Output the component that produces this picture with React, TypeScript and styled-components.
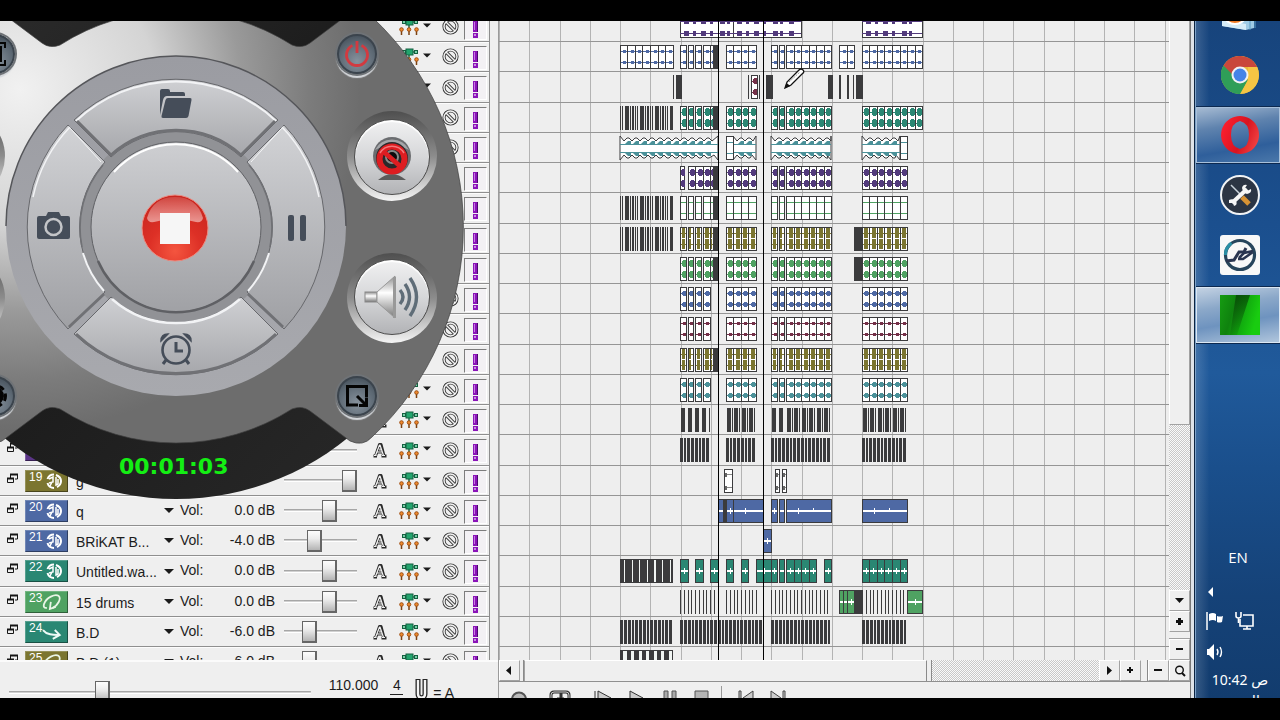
import React from 'react';
import styled, { createGlobalStyle, css } from 'styled-components';

const GlobalStyle = createGlobalStyle`
  *, *::before, *::after { box-sizing: border-box; }
  body {
    margin: 0;
    background: #000;
    color: #1c1c1c;
    font-family: "Liberation Sans", Arial, sans-serif;
    font-size: 14px;
    line-height: 18px;
  }
  ul { margin: 0; padding: 0; list-style: none; }
  button {
    margin: 0; padding: 0; border: 0; background: none;
    color: inherit; font: inherit; cursor: pointer;
  }
`;

/* ---------- palette ---------- */

const ink = '#3b3b3d';
const palette = {
  olive: '#7b7530',
  blue: '#4e69a4',
  teal: '#2a8773',
  green: '#4fa262',
  purple: '#523a7c',
  cyan: '#4b9199',
  maroon: '#743048',
};

/* ---------- page frame ---------- */

const Screen = styled.div`
  display: flex;
  flex-direction: column;
  height: 100vh;
  padding: 21px 0 22px;
  background: #000;
`;

const Desktop = styled.main`
  position: relative;
  display: flex;
  flex: 1;
  min-height: 0;
  overflow: hidden;
  background: #efefef;
`;

const TrackPane = styled.section`
  display: flex;
  flex: none;
  flex-direction: column;
  width: 499px;
  border-right: 1px solid #9b9b9b;
`;

const TrackScroll = styled.div`
  flex: 1;
  min-height: 0;
  overflow: hidden;
  margin-right: 8px;
  border-right: 1px solid #8d8d8d;
`;

const ScrolledList = styled.ul`
  margin-top: -9px;
`;

const rowHeight = (i: number) => (i % 4 === 2 ? 31 : 30);

const TrackRow = styled.li<{ $h: number }>`
  display: grid;
  grid-template-columns: 18px 51px 88px 16px 28px 67px 9px 73px 15px 20px 7px 24px 14px 5px 20px 2px 23px;
  align-items: center;
  height: ${(p) => p.$h}px;
  padding-left: 7px;
  border-bottom: 1px solid #8f8f8f;
  box-shadow: inset 0 1px 0 #fcfcfc;
`;

const Cell = styled.span<{ $col: number }>`
  grid-row: 1;
  grid-column: ${(p) => p.$col};
  padding-bottom: 2px;
`;

const IconButton = styled.button<{ $col: number; $raise?: number }>`
  display: flex;
  grid-row: 1;
  grid-column: ${(p) => p.$col};
  align-items: center;
  padding-bottom: ${(p) => p.$raise ?? 0}px;
`;

const Badge = styled.button<{ $color: string }>`
  display: flex;
  grid-row: 1;
  grid-column: 2;
  justify-content: space-between;
  width: 43px;
  height: 22px;
  padding: 0 5px 0 3px;
  border: 1px solid #00000066;
  border-top-color: #ffffff33;
  border-left-color: #ffffff33;
  background: ${(p) => p.$color};
  color: #fff;
  font-size: 12px;
  line-height: 13px;
`;

const TrackName = styled(Cell)`
  padding: 2px 0 0;
  white-space: nowrap;
`;

const Amount = styled(Cell)`
  text-align: right;
`;

const Fader = styled.input<{ $col?: number }>`
  grid-row: 1;
  grid-column: ${(p) => p.$col ?? 'auto'};
  width: 100%;
  height: 24px;
  margin: 0;
  appearance: none;
  background: linear-gradient(#a6a6a6 1px, #d0d0d0 1px 2px, #fff 2px) center / 100% 3px no-repeat;

  &::-webkit-slider-thumb {
    appearance: none;
    width: 15px;
    height: 22px;
    border: 1px solid #666;
    border-right-width: 2px;
    border-bottom-width: 2px;
    background: linear-gradient(#fdfdfd, #ececec 40%, #b4b4b4);
  }
`;

const FxButton = styled.button`
  display: flex;
  grid-row: 1;
  grid-column: 17;
  align-items: flex-end;
  justify-content: center;
  height: 24px;
  margin-top: 2px;
  padding: 0 0 1px;
  border: 1px solid #fff;
  border-top-color: #7d7d7d;
  border-left-color: #7d7d7d;
  background: #f3f1f4;
`;

const TempoBar = styled.div`
  display: flex;
  flex: none;
  gap: 12px;
  height: 38px;
  padding: 14px 44px 0 9px;
  overflow: hidden;
  border-top: 2px solid #fbfbfb;
`;

const TempoFader = styled(Fader)`
  flex: 1;
  width: auto;
  height: 24px;
  margin-right: 6px;
  margin-top: 4px;
`;

const Meter = styled.span`
  align-self: flex-start;
  width: 13px;
  border-bottom: 1px solid #222;
  text-align: center;
`;

const Tuning = styled.span`
  display: flex;
  gap: 5px;
  align-items: flex-start;
`;

const TuneKey = styled.span`
  padding-top: 8px;
`;

/* ---------- arrangement ---------- */

const ArrangePane = styled.section`
  display: flex;
  flex: 1;
  flex-direction: column;
  min-width: 0;
`;

const ArrangeTop = styled.div`
  display: flex;
  flex: 1;
  min-height: 0;
`;

const Lanes = styled.div`
  position: relative;
  flex: 1;
  min-width: 0;
  overflow: hidden;
  background: #eeeeee;
`;

const Lane = styled.li<{ $h: number }>`
  height: ${(p) => p.$h}px;
  padding-top: 3px;
  border-bottom: 1px solid #959595;
  background:
    linear-gradient(
      90deg,
      #b3b3b3 1px, transparent 1px 30px,
      #b3b3b3 30px 31px, transparent 31px 61px,
      #b3b3b3 61px 62px, transparent 62px 91px,
      #b3b3b3 91px 92px, transparent 92px
    ) 0 0 / 121px 100%;
`;

const LaneArt = styled.svg`
  display: block;
  width: 100%;
  height: 24px;
  overflow: visible;
`;

const CursorLine = styled.div<{ $x: number }>`
  position: absolute;
  top: 0;
  bottom: 0;
  left: ${(p) => p.$x}px;
  width: 1px;
  background: #000;
`;

const PencilCursor = styled.svg`
  position: absolute;
  top: 46px;
  left: 285px;
`;

const dither = css`
  background: repeating-conic-gradient(#c9c9c9 0 25%, #fafafa 0 50%) 0 0 / 2px 2px;
`;

const VScroll = styled.div`
  display: flex;
  flex: none;
  flex-direction: column;
  width: 21px;
`;

const HScroll = styled.div`
  display: flex;
  flex: none;
  height: 22px;
  border-bottom: 1px solid #8f8f8f;
`;

const ScrollButton = styled.button`
  display: flex;
  flex: none;
  align-items: center;
  justify-content: center;
  width: 21px;
  height: 21px;
  border: 1px solid #a2a2a2;
  border-top-color: #fff;
  border-left-color: #fff;
  background: #efefef;
`;

const ThumbV = styled.div`
  flex: 402;
  border: 1px solid #a2a2a2;
  border-top: 0;
  border-left-color: #fff;
`;

const TrackV = styled.div`
  flex: 165;
  ${dither}
`;

const SplitV = styled.div`
  flex: none;
  height: 7px;
  border-bottom: 1px solid #a2a2a2;
`;

const ThumbH = styled.div`
  flex: 400;
  border-left: 1px solid #a2a2a2;
  border-right: 1px solid #8a8a8a;
  border-top: 1px solid #fff;
`;

const GripH = styled.div<{ $w: number }>`
  flex: none;
  width: ${(p) => p.$w}px;
  border-right: 1px solid #8a8a8a;
`;

const TrackH = styled.div`
  flex: 166;
  ${dither}
`;

const Transport = styled.div`
  display: flex;
  flex: none;
  gap: 16px;
  height: 16px;
  padding: 8px 0 0 10px;
  overflow: hidden;
`;

const TransportButton = styled.button<{ $w: number }>`
  flex: none;
  width: ${(p) => p.$w}px;
  height: 16px;
`;

const TransportRule = styled.span`
  width: 1px;
  margin: -4px 0 0 -4px;
  background: #999;
`;

const Edge = styled.div`
  flex: none;
  width: 5px;
  border-left: 1px solid #777;
  border-right: 1px solid #0c2340;
  background: #dfe3e8;
`;

/* ---------- taskbar ---------- */

const Taskbar = styled.aside`
  display: flex;
  flex: none;
  flex-direction: column;
  width: 85px;
  border-left: 1px solid #7fa3c8;
  background:
    linear-gradient(90deg, #ffffff26, transparent 16%),
    linear-gradient(#17447c, #1b4f8e 30%, #205a9b 52%, #1a4f8c 66%, #154278 85%, #123c6e);
  overflow: hidden;
`;

const Apps = styled.ul`
  display: flex;
  flex: none;
  flex-direction: column;
  gap: 4px;
  margin-top: -34px;
`;

const AppButton = styled.button<{ $active?: number }>`
  display: flex;
  align-items: center;
  justify-content: center;
  width: 100%;
  height: 56px;
  padding-left: 4px;
  ${(p) =>
    p.$active === 1 &&
    css`
      background: linear-gradient(170deg, #a9bdd4, #5f83ae 34%, #2f5f9b 70%, #4c79ab);
      box-shadow: 0 0 0 1px #0c2950, inset 0 0 0 1px #a8c0da;
    `}
  ${(p) =>
    p.$active === 2 &&
    css`
      background: linear-gradient(170deg, #c6d4e4, #8ba8c9 34%, #6e93bf 60%, #b3c8de);
      box-shadow: 0 0 0 1px #0c2950, inset 0 0 0 1px #dbe7f3;
    `}
`;

const Tray = styled.div`
  display: flex;
  flex: none;
  flex-direction: column;
  height: 151px;
  margin-top: auto;
  color: #fff;
`;

const Language = styled.button`
  flex: none;
  height: 20px;
  margin-bottom: 9px;
  text-align: center;
  font-family: "Open Sans", "Noto Sans", sans-serif;
  font-size: 15px;
  line-height: 20px;
`;

const TrayRow = styled.div`
  display: flex;
  flex: none;
  gap: 10px;
  align-items: center;
  height: 31px;
  padding-left: 9px;
`;

const Clock = styled.time`
  flex: none;
  margin-top: 1px;
  padding-left: 4px;
  font-family: "Noto Sans", "DejaVu Sans", sans-serif;
  font-size: 14px;
  line-height: 20px;
  text-align: center;
  white-space: nowrap;
`;

const Day = styled.div`
  margin-top: 1px;
`;

/* ---------- recorder ---------- */

const Recorder = styled.section`
  position: absolute;
  top: 0;
  left: 0;
  width: 470px;
  height: 480px;
  overflow: hidden;
  pointer-events: none;
`;

const RecorderBody = styled.svg`
  position: absolute;
  inset: 0;
`;

const DialButton = styled.button<{ $x: number; $y: number; $r: number }>`
  position: absolute;
  display: flex;
  align-items: center;
  justify-content: center;
  left: ${(p) => p.$x - p.$r}px;
  top: ${(p) => p.$y - p.$r}px;
  width: ${(p) => p.$r * 2}px;
  height: ${(p) => p.$r * 2}px;
  border-radius: 50%;
  pointer-events: auto;

  svg { flex: none; }
`;

const SmallKnob = styled(DialButton)`
  border: 2px solid #3b444d;
  background: radial-gradient(circle at 50% 70%, #87929d, #5b6772 60%, #3a444e);
  box-shadow: 0 0 0 2px #6f7377, 0 3px 1px 1px #d5d8dc;
`;

const LargeKnob = styled(DialButton)`
  border: 1px solid #4c4c4c;
  background: linear-gradient(#f1f1f2, #d6d7d9 50%, #b2b3b6);
  box-shadow: inset 0 2px 1px #fff;
`;

const Elapsed = styled.time`
  position: absolute;
  top: 436px;
  left: 119px;
  color: #14ee14;
  font-family: "DejaVu Sans", sans-serif;
  font-size: 22px;
  font-weight: bold;
  line-height: 20px;
`;

/* ---------- icons ---------- */

const Caret = ({ size = 9 }: { size?: number }) => (
  <svg width={size} height="5" viewBox="0 0 10 5" aria-hidden="true">
    <path d="M0 0h10L5 5z" fill="#1a1a1a" />
  </svg>
);

const RestoreIcon = () => (
  <svg width="11" height="11" viewBox="0 0 11 11" fill="none" stroke="#151515">
    <path d="M3.5 5V1.5h7V6H8" />
    <path d="M3 1.5h8" strokeWidth="2" />
    <path d="M.5 5.5h6v4h-6z" fill="#efefef" />
    <path d="M0 5.5h7" strokeWidth="2" />
  </svg>
);

const WheelIcon = () => (
  <svg width="16" height="20" viewBox="0 -2 16 20" fill="none" stroke="#fff" strokeWidth="2">
    <path d="M10 2q5 2 5 6t-4 6" />
    <path d="M8 15Q3 15 1.500 10" />
    <path d="M1.500 6Q3 1.500 8 1.500" />
    <path d="M3 6l4-2v5l-4 1M6 9l-2 4M10 4v8l2-1V6" strokeWidth="1.500" />
  </svg>
);

const LoopIcon = () => (
  <svg width="20" height="19" viewBox="0 -2 20 19" fill="none" stroke="#e9f5e6" strokeWidth="1.8">
    <path d="M5 14C-1 15 2 6 9 2.500S20 2 17 8c-1.500 3-4 5-6 6" />
    <path d="M9 8l-1 7 6-2" />
  </svg>
);

const ShotIcon = () => (
  <svg width="20" height="18" viewBox="0 -4 20 18" fill="none" stroke="#eefaf6" strokeWidth="2">
    <path d="M1 4c4 5 10 5 16 5" />
    <path d="M13 4l5 5-7 4" />
  </svg>
);

const AutoIcon = () => (
  <svg width="16" height="16" viewBox="0 0 16 16" strokeLinejoin="round">
    <path d="M1.500 14h3.500M9.500 14h5M3.500 14 7.500 2.500h1.500L12 14M5 10h6" fill="none" stroke="#2a2a2a" strokeWidth="3" />
    <path d="M2 13.500h2.500M10 13.500h3M3.500 13.500 7.500 3h.500L11.500 13.500M5 10h5" fill="none" stroke="#f2f2f2" strokeWidth="1.200" />
  </svg>
);

const RouteIcon = () => (
  <svg width="20" height="17" viewBox="0 0 20 17">
    <path d="M3 4h14M10 7v3" stroke="#1f6b4a" strokeWidth="1.500" />
    <rect x="7" y="1" width="7" height="6" fill="#23a56e" stroke="#146040" />
    <rect x="3.500" y="2.500" width="3" height="3" fill="#79cfa8" stroke="#146040" />
    <rect x="15.500" y="2.500" width="3" height="3" fill="#79cfa8" stroke="#146040" />
    <path d="M2.500 12v5M10 12v5M17.500 12v5" stroke="#7b4212" strokeWidth="1.500" />
    <circle cx="2.500" cy="11.500" r="1.800" fill="#ef8a2e" stroke="#a04f12" />
    <circle cx="10" cy="11.500" r="1.800" fill="#ef8a2e" stroke="#a04f12" />
    <circle cx="17.500" cy="11.500" r="1.800" fill="#ef8a2e" stroke="#a04f12" />
  </svg>
);

const MuteIcon = () => (
  <svg width="17" height="17" viewBox="0 0 17 17" fill="none">
    <circle cx="8.500" cy="8.500" r="6.500" stroke="#3a3a3a" strokeWidth="3.200" />
    <path d="M3 3l11 11" stroke="#3a3a3a" strokeWidth="3.200" />
    <circle cx="8.500" cy="8.500" r="6.500" stroke="#f4f4f4" strokeWidth="1.400" />
    <path d="M4 4l9 9" stroke="#f4f4f4" strokeWidth="1.400" />
  </svg>
);

const SoloIcon = () => (
  <svg width="7" height="17" viewBox="0 0 7 17">
    <rect x="1" y="0" width="5" height="11" fill="#8a14b8" />
    <rect x="2" y="1" width="1" height="8" fill="#c77be2" />
    <rect x="5" y="0" width="1" height="11" fill="#4d0870" />
    <rect x="1" y="12" width="5" height="5" fill="#8a14b8" />
    <rect x="2" y="13" width="2" height="2" fill="#c98fe0" />
  </svg>
);

const ForkIcon = () => (
  <svg width="13" height="24" viewBox="0 -3 13 24" fill="none">
    <path d="M3 0v15c0 5 7 5 7 0V0" stroke="#262626" strokeWidth="5" />
    <path d="M3 1v14c0 5 7 5 7 0V1" stroke="#f6f6f6" strokeWidth="2.400" />
  </svg>
);

const Arrow = ({ d }: { d: string }) => (
  <svg width="11" height="11" viewBox="0 0 11 11"><path d={d} fill="#111" /></svg>
);

const MagnifyIcon = () => (
  <svg width="12" height="12" viewBox="0 0 12 12" fill="none" stroke="#111">
    <circle cx="5.500" cy="5" r="3.800" strokeWidth="1.400" />
    <path d="M8 8l3 3" strokeWidth="2" />
  </svg>
);

/* ---------- arrangement data: positions in beats ---------- */

const beatX = (b: number) => Math.round(b * 7.5625 - 0.3);

type Span = [number, number];
type Part =
  | { kind: 'cells'; span: Span; color: string; amp: number }
  | { kind: 'dark'; span: Span }
  | { kind: 'streak'; span: Span }
  | { kind: 'bars'; span: Span; code: Code }
  | { kind: 'crimp'; span: Span; color: string }
  | { kind: 'solid'; span: Span; color: string }
  | { kind: 'wide'; span: Span; color: string }
  | { kind: 'box'; span: Span };

type Code = { period: number; bars: Span[] };
const codes: Record<string, Code> = {
  mixed: { period: 15, bars: [[0, 1], [2, 1], [5, 4], [10, 1], [12, 2]] },
  blocks: { period: 7, bars: [[1, 4]] },
  coarse: { period: 15, bars: [[1, 4], [6, 1], [8, 4], [13, 1]] },
  even: { period: 15, bars: [[0, 3], [4, 2], [7, 3], [11, 3]] },
  thin: { period: 15, bars: [[0, 1], [4, 1], [8, 1], [11, 1]] },
  dense: { period: 15, bars: [[0, 3], [4, 3], [8, 3], [12, 2]] },
};

const cells = (color: string, amp: number, ...spans: Span[]): Part[] =>
  spans.map((span) => ({ kind: 'cells', span, color, amp }));
const dark = (...spans: Span[]): Part[] => spans.map((span) => ({ kind: 'dark', span }));
const bars = (name: string, ...spans: Span[]): Part[] =>
  spans.map((span) => ({ kind: 'bars', span, code: codes[name] }));
const solid = (color: string, ...spans: Span[]): Part[] =>
  spans.map((span) => ({ kind: 'solid', span, color }));

const intro: Span[] = [[24, 24.750], [25, 25.750], [26, 26.750]];
const body: Span[] = [[30, 34], [36, 36.750], [37, 37.750], [38, 44]];
const outro: Span = [48, 54];

const lanes: Part[][] = [
  [
    { kind: 'wide', span: [24, 31], color: palette.purple },
    { kind: 'wide', span: [31, 40], color: palette.purple },
    { kind: 'wide', span: [48, 56], color: palette.purple },
  ],
  [
    ...cells(palette.blue, 3, [16, 23], ...intro, [27, 28.500], ...body, [45, 47], [48, 56]),
    ...dark([28.400, 29]),
  ],
  [
    ...dark([23.100, 23.200], [23.400, 24.300], [33, 33.100], [34.400, 34.500], [35.400, 36.300], [43.500, 44.200], [45, 45.300], [46, 46.300], [46.900, 47], [47.300, 48.200]),
    ...cells(palette.maroon, 6, [33.400, 34.200]),
  ],
  [
    ...bars('mixed', [16, 23]),
    ...cells(palette.teal, 8, ...intro, [27, 28.500], ...body, [48, 56]),
    ...dark([28.400, 29]),
  ],
  [
    { kind: 'crimp', span: [16, 29], color: palette.cyan },
    { kind: 'crimp', span: [31, 34], color: palette.cyan },
    ...cells(palette.cyan, 1, [30, 31]),
    { kind: 'crimp', span: [36, 44], color: palette.cyan },
    { kind: 'crimp', span: [48, 53], color: palette.cyan },
    ...cells(palette.cyan, 1, [53, 54]),
  ],
  [...cells(palette.purple, 7, [24, 24.500], [25, 28.500], ...body, outro), ...dark([28.400, 29])],
  [
    ...bars('mixed', [16, 23]),
    ...cells(palette.green, 1, ...intro, [27, 28.500], ...body, outro),
    ...dark([28.400, 29]),
  ],
  [
    ...bars('mixed', [16, 23]),
    ...cells(palette.olive, 10, ...intro, [27, 28.500], ...body, outro),
    ...dark([28.400, 29], [47, 48]),
  ],
  [...cells(palette.green, 7, ...intro, [27, 28.500], ...body, outro), ...dark([28.400, 29], [47, 48])],
  cells(palette.blue, 5, ...intro, [27, 28], ...body, outro),
  cells(palette.maroon, 3, ...intro, [27, 28], ...body, outro),
  [...cells(palette.olive, 10, ...intro, [27, 28.500], ...body, outro), ...dark([28.400, 29])],
  cells(palette.cyan, 5, ...intro, [27, 28], ...body, outro),
  [...bars('blocks', [24, 28], [36, 38]), ...bars('coarse', [30, 34], [38, 44], outro)],
  bars('even', [24, 28], [30, 34], [36, 44], outro),
  [
    { kind: 'box', span: [29.750, 30.850] },
    { kind: 'box', span: [36.500, 37.100] },
    { kind: 'box', span: [37.400, 38] },
  ],
  [
    ...solid(palette.blue, [29, 29.700], [30, 31], [31, 35], [36, 36.750], [37, 37.750], [38, 44], outro),
    ...dark([29.700, 30.100]),
  ],
  solid(palette.blue, [35, 36]),
  [
    ...dark([16, 23]),
    ...[16, 17, 18, 19, 20, 21, 22].map((b): Part => ({ kind: 'streak', span: [b + 0.600, b + 0.750] })),
    ...solid(palette.teal, [24, 25], [26, 27], [28, 29], [30, 31], [32, 33], [34, 36], [36, 36.750], [37, 37.750], [38, 39], [39, 40], [40, 41], [41, 42], [43, 44]),
    ...solid(palette.teal, [48, 49], [49, 50], [50, 51], [51, 52], [52, 53], [53, 54]),
  ],
  [
    ...bars('thin', [24, 29], [30, 34.300], [36, 44], [48, 54]),
    ...solid(palette.green, [45, 45.500], [45.500, 46], [46, 47], [54, 56]),
    ...dark([47, 48]),
  ],
  bars('dense', [16, 23], [24, 35], [36, 44], outro),
  [
    ...dark([16, 23]),
    ...[16, 17, 18, 19, 20, 21, 22].map((b): Part => ({ kind: 'streak', span: [b + 0.500, b + 0.900] })),
  ],
];

function Wave({ x, w, color, amp }: { x: number; w: number; color: string; amp: number }) {
  const mid = x + Math.round(w / 2);
  const wide = Math.min(5, w - 1);
  const top = Math.floor(amp / 2);
  return (
    <g fill={color}>
      {[6, 17].map((y) => (
        <g key={y}>
          <rect x={x} y={y} width={w} height="1" />
          {amp >= 10 && <rect x={mid - 2} y={y - 5} width={wide - 1} height={amp} />}
          {amp > 2 && amp < 10 && (
            <>
              <rect x={mid - 1} y={y - top} width="3" height={amp} />
              <rect x={mid - 2} y={y - top + 1} width={wide} height={amp - 2} />
            </>
          )}
        </g>
      ))}
    </g>
  );
}

function CellRun({ span, color, amp }: { span: Span; color: string; amp: number }) {
  const out: React.ReactNode[] = [];
  for (let b = span[0]; b < span[1]; b += 1) {
    const x = beatX(b);
    const w = beatX(Math.min(b + 1, span[1])) - x;
    out.push(
      <g key={b}>
        <rect x={x + 0.500} y="0.500" width={w} height="23" fill="#fff" stroke={ink} />
        <Wave x={x + 1} w={w - 1} color={color} amp={amp} />
      </g>,
    );
  }
  return <g>{out}</g>;
}

function BarRun({ span, code }: { span: Span; code: Code }) {
  const out: React.ReactNode[] = [];
  const end = beatX(span[1]);
  for (let x = beatX(span[0]); x < end; x += code.period) {
    for (const [dx, w] of code.bars) {
      const width = Math.min(w, end - x - dx);
      if (width > 0) out.push(<rect key={x + dx} x={x + dx} y="0" width={width} height="24" />);
    }
  }
  return <g fill={ink}>{out}</g>;
}

function Crimp({ span, color }: { span: Span; color: string }) {
  const x0 = beatX(span[0]);
  const x1 = beatX(span[1]);
  let top = `M${x0} 0L${x0 + 4} 5`;
  let bottom = '';
  const teeth: string[] = [];
  for (let x = x0 + 4; x + 7 < x1; x += 8) {
    top += `L${x + 3} 2L${x + 5} 2L${x + 8} 5`;
    bottom = `L${x + 5} 22L${x + 3} 22L${x} 19` + bottom;
    teeth.push(`M${x} 9h7v-4h-3zM${x} 16h7v4h-3z`);
  }
  return (
    <g>
      <path d={`${top}L${x1} 0V24L${x1 - 4} 19${bottom}L${x0} 24Z`} fill="#fff" stroke={ink} strokeWidth="1" />
      <path d={`M${x0} 8.500H${x1}M${x0} 16.500H${x1}`} stroke={color} />
      <path d={teeth.join('')} fill={color} />
    </g>
  );
}

function PartArt({ part }: { part: Part }) {
  const x = beatX(part.span[0]);
  const w = Math.max(1, beatX(part.span[1]) - x);
  switch (part.kind) {
    case 'cells':
      return <CellRun span={part.span} color={part.color} amp={part.amp} />;
    case 'bars':
      return <BarRun span={part.span} code={part.code} />;
    case 'dark':
      return <rect x={x} y="0" width={w} height="24" fill={ink} />;
    case 'streak':
      return <rect x={x} y="1" width={w} height="22" fill="#f1f5f3" />;
    case 'crimp':
      return <Crimp span={part.span} color={part.color} />;
    case 'box':
      return (
        <g>
          <rect x={x + 0.500} y="0.500" width={w} height="23" fill="#fff" stroke={ink} />
          {w > 3 && <path d={`M${x + 1} 5.500h${w - 1}M${x + 1} 18.500h${w - 1}`} stroke="#888" />}
          {w > 3 && <path d={`M${x + 1} 4h2v4h-2zM${x + 1} 17h2v4h-2z`} fill="#666" />}
        </g>
      );
    case 'wide':
      return (
        <g>
          <rect x={x + 0.500} y="-.5" width={w} height="23" fill="#fff" stroke={ink} />
          <path d={`M${x} 6.500h${w}M${x} 18.500h${w}`} stroke={part.color} />
          {[4, 13, 21, 30, 40, 47, 56].filter((d) => d + 5 < w).map((d, i) => (
            <g key={d} fill={part.color}>
              <rect x={x + d} y="4" width={i % 2 ? 3 : 5} height="5" />
              <rect x={x + d} y="16" width={i % 2 ? 3 : 5} height="5" />
            </g>
          ))}
        </g>
      );
    case 'solid':
      return (
        <g>
          <rect x={x + 0.500} y="0.500" width={w} height="23" fill={part.color} stroke={ink} />
          <rect x={x + 1} y="11" width={w - 1} height="2" fill="#fff" />
          {w > 5 && <rect x={x + Math.min(12, Math.round(w / 2))} y="9" width="1" height="6" fill="#fff" />}
          {w > 30 && <rect x={x + w - 18} y="9" width="1" height="4" fill="#fff" />}
        </g>
      );
  }
}

/* ---------- tracks ---------- */

type Track = { no?: number; color?: string; icon?: React.ReactNode; name?: string; vol?: string; level?: number };

const tracks: Track[] = [
  ...Array.from({ length: 14 }, () => ({})),
  { no: 18, color: '#5b3588', level: 20 },
  { no: 19, color: palette.olive, icon: <WheelIcon />, name: 'g', level: 100 },
  { no: 20, color: palette.blue, icon: <WheelIcon />, name: 'q', vol: '0.0 dB', level: 66 },
  { no: 21, color: palette.blue, icon: <WheelIcon />, name: 'BRiKAT B...', vol: '-4.0 dB', level: 40 },
  { no: 22, color: palette.teal, icon: <WheelIcon />, name: 'Untitled.wa...', vol: '0.0 dB', level: 66 },
  { no: 23, color: palette.green, icon: <LoopIcon />, name: '15 drums', vol: '0.0 dB', level: 66 },
  { no: 24, color: palette.teal, icon: <ShotIcon />, name: 'B.D', vol: '-6.0 dB', level: 31 },
  { no: 25, color: palette.olive, icon: <LoopIcon />, name: 'B.D (1)', vol: '-6.0 dB', level: 31 },
];

function TrackLine({ track, index }: { track: Track; index: number }) {
  return (
    <TrackRow $h={rowHeight(index)}>
      {track.no && (
        <>
          <IconButton $col={1} $raise={5} aria-label="Restore track"><RestoreIcon /></IconButton>
          <Badge $color={track.color!}>{track.no}{track.icon}</Badge>
        </>
      )}
      {track.name && <TrackName $col={3}>{track.name}</TrackName>}
      {track.vol && (
        <>
          <IconButton $col={4} aria-label="Volume or pan"><Caret size={10} /></IconButton>
          <Cell $col={5}>Vol:</Cell>
          <Amount $col={6}>{track.vol}</Amount>
        </>
      )}
      {track.level !== undefined && (
        <Fader $col={8} type="range" min="0" max="100" defaultValue={track.level} aria-label="Track volume" />
      )}
      {index > 11 && <IconButton $col={10} aria-label="Automation"><AutoIcon /></IconButton>}
      <IconButton $col={12} aria-label="Output routing"><RouteIcon /></IconButton>
      <IconButton $col={13} $raise={3} aria-label="Routing menu"><Caret size={8} /></IconButton>
      <IconButton $col={15} aria-label="Mute"><MuteIcon /></IconButton>
      <FxButton aria-label="Solo"><SoloIcon /></FxButton>
    </TrackRow>
  );
}

/* ---------- recorder drawing ---------- */

const silhouette =
  'M372 437Q363 447 350 441L310 411Q302 405 292 409A215 215 0 0 1 60 409Q50 405 42 411L2 441Q-11 447 -20 437A287 287 0 0 1 -20 17Q-11 7 2 13L42 43Q50 49 60 45A215 215 0 0 1 292 45Q302 49 310 43L350 13Q363 7 372 17A287 287 0 0 1 372 437Z';
const sector = 'M-102 -107A148 148 0 0 1 102 -107L65 -70A96 96 0 0 0 -65 -70Z';

function RecorderFace() {
  return (
    <RecorderBody width="470" height="480" viewBox="0 21 470 480" aria-hidden="true">
      <defs>
        <radialGradient id="shell" gradientUnits="userSpaceOnUse" cx="20" cy="90" r="340">
          <stop offset="0" stopColor="#f1f1f1" />
          <stop offset=".4" stopColor="#d4d4d4" />
          <stop offset=".65" stopColor="#9a9a9a" />
          <stop offset=".85" stopColor="#7c7c7c" />
          <stop offset="1" stopColor="#6d6d6d" />
        </radialGradient>
        <linearGradient id="ring" x1="0" y1="0" x2="0" y2="1">
          <stop offset="0" stopColor="#9b9ca2" />
          <stop offset="1" stopColor="#a8a9ae" />
        </linearGradient>
        <linearGradient id="topKey" x1="0" y1="0" x2="0" y2="1">
          <stop offset="0" stopColor="#cfd0d3" />
          <stop offset="1" stopColor="#a6a7ab" />
        </linearGradient>
        <linearGradient id="sideKey" x1="0" y1="0" x2="0" y2="1">
          <stop offset="0" stopColor="#d2d3d6" />
          <stop offset="1" stopColor="#9fa0a4" />
        </linearGradient>
        <linearGradient id="hub" x1="0" y1="0" x2="0" y2="1">
          <stop offset="0" stopColor="#cecfd2" />
          <stop offset="1" stopColor="#a0a1a5" />
        </linearGradient>
        <linearGradient id="bezel" x1="0" y1="0" x2="0" y2="1">
          <stop offset="0" stopColor="#4f4f4f" />
          <stop offset=".5" stopColor="#8c8c8c" />
          <stop offset="1" stopColor="#f4f4f4" />
        </linearGradient>
        <linearGradient id="bowl" x1="0" y1="0" x2="1" y2="1">
          <stop offset="0" stopColor="#303030" />
          <stop offset=".5" stopColor="#1c1c1c" />
          <stop offset="1" stopColor="#2a2a2a" />
        </linearGradient>
      </defs>
      <circle cx="176" cy="227" r="272" fill="url(#bowl)" />
      <path d={silhouette} fill="url(#shell)" stroke="#3f3f3f" strokeOpacity=".7" strokeWidth="1" />
      <circle cx="176" cy="226" r="170" fill="url(#ring)" />
      <path d="M6 226A170 170 0 0 1 346 226" fill="none" stroke="#55565a" strokeWidth="1.500" />
      <g transform="translate(176 227)">
        <circle r="99" fill="#919296" />
        <g stroke="#67686c" strokeWidth="1" strokeLinejoin="round">
          <path d="M-108 -102A148 148 0 0 0 -108 102L-71 65A96 96 0 0 1 -71 -65Z" fill="url(#sideKey)" />
          <path d="M108 -102A148 148 0 0 1 108 102L71 65A96 96 0 0 0 71 -65Z" fill="url(#sideKey)" />
          <path d={sector} fill="url(#topKey)" />
          <path d="M-102 107A148 148 0 0 0 102 107L65 70A96 96 0 0 1 -65 70Z" fill="url(#topKey)" />
        </g>
        <g fill="none" stroke="#f2f3f5" strokeWidth="2">
          <path d="M-100 -106A146 146 0 0 1 100 -106" />
          <path d="M-106 -100A146 146 0 0 0 -143 -30M106 -100A146 146 0 0 1 143 -30" strokeWidth="1.500" />
          <path d="M-64 72A97 97 0 0 0 64 72" strokeWidth="2.500" />
          <path d="M-75 -65L-106 -99M75 -65L106 -99" strokeWidth="1" />
          <path d="M-72 64A97 97 0 0 1 -93 26M72 64A97 97 0 0 0 93 26" strokeWidth="2" />
        </g>
        <g fill="none" stroke="#707175" strokeWidth="3">
          <path d="M-99 -106L-65 -72A98 98 0 0 1 65 -72L99 -106" strokeLinejoin="round" />
          <path d="M-100 107A146 146 0 0 0 100 107" strokeWidth="3" />
          <path d="M-107 100L-72 67M107 100L72 67" strokeWidth="3" />
          <path d="M-73 -62A97 97 0 0 0 -94 20M73 -62A97 97 0 0 1 94 20" strokeWidth="1.500" />
        </g>
        <circle r="85" fill="url(#hub)" stroke="#606165" strokeWidth="1" />
        <path d="M-62 -55A83 83 0 0 1 62 -55" fill="none" stroke="#fff" strokeWidth="2" />
        <path d="M-78 34A85 85 0 0 0 78 34" fill="none" stroke="#5f6064" strokeWidth="2.500" />
      </g>
      <circle cx="392" cy="156" r="45" fill="url(#bezel)" />
      <circle cx="392" cy="298" r="45" fill="url(#bezel)" />
      <circle cx="-40" cy="156" r="45" fill="url(#bezel)" />
      <circle cx="-40" cy="298" r="45" fill="url(#bezel)" />
    </RecorderBody>
  );
}

const slate = '#454d59';

function RecorderPanel() {
  return (
    <Recorder aria-label="Screen recorder">
      <RecorderFace />
      <DialButton $x={176} $y={83} $r={22} aria-label="Open folder">
        <svg width="32" height="30" viewBox="0 0 32 30" fill={slate}>
          <path d="M0 26V2q0-2 2-2h6q2 0 2 2v1h13q2 0 2 2v2H7q-3 0-4 4z" />
          <path d="M8 9h22q2 0 1.500 2l-3 16q-.5 2-2.500 2H3q-2 0-1.500-2l4-16q.5-2 2.500-2z" />
        </svg>
      </DialButton>
      <DialButton $x={53} $y={205} $r={22} aria-label="Take snapshot">
        <svg width="33" height="28" viewBox="0 0 33 28">
          <path d="M2 4h7l2-4h11l2 4h7q2 0 2 2v19q0 2-2 2H2q-2 0-2-2V6q0-2 2-2z" fill={slate} />
          <circle cx="16.500" cy="15" r="8" fill="none" stroke="#c4c5c8" strokeWidth="2.500" />
        </svg>
      </DialButton>
      <DialButton $x={297} $y={207} $r={22} aria-label="Pause">
        <svg width="20" height="26" viewBox="0 0 20 26" fill={slate}>
          <rect x="1" y="0" width="6" height="26" rx="2" />
          <rect x="13" y="0" width="6" height="26" rx="2" />
        </svg>
      </DialButton>
      <DialButton $x={176} $y={328} $r={22} aria-label="Schedule">
        <svg width="34" height="32" viewBox="0 0 34 32" fill="none" stroke={slate}>
          <circle cx="17" cy="17" r="13.500" strokeWidth="2.600" />
          <path d="M17 9v9h7" strokeWidth="3" />
          <path d="M7 27l-3 4M27 27l3 4" strokeWidth="3" />
          <path d="M2 8q0-7 7-7zM32 8q0-7-7-7z" fill={slate} strokeWidth="1.500" />
        </svg>
      </DialButton>
      <DialButton $x={175} $y={207} $r={34} aria-label="Stop recording">
        <svg width="68" height="68" viewBox="0 0 68 68">
          <defs>
            <radialGradient id="stop" cx=".5" cy=".85" r=".8">
              <stop offset="0" stopColor="#f4553f" />
              <stop offset=".5" stopColor="#dd3026" />
              <stop offset="1" stopColor="#c9261f" />
            </radialGradient>
            <linearGradient id="gloss" x1="0" y1="0" x2="0" y2="1">
              <stop offset="0" stopColor="#fff" stopOpacity=".15" />
              <stop offset="1" stopColor="#fff" stopOpacity=".5" />
            </linearGradient>
          </defs>
          <circle cx="34" cy="34" r="33" fill="url(#stop)" stroke="#ec8a80" />
          <path d="M6 24Q12 3 34 3T62 24Q61 29 55 28Q34 22 13 28Q7 29 6 24Z" fill="url(#gloss)" />
          <rect x="19" y="19" width="30" height="31" fill="#f6f6f6" />
        </svg>
      </DialButton>
      <SmallKnob $x={357} $y={33} $r={20} aria-label="Close">
        <svg width="26" height="28" viewBox="0 0 26 28" fill="none" stroke="#d23a40" strokeWidth="2.800">
          <path d="M8.500 5.500a10.500 10.500 0 1 0 9 0M13 1v12" />
        </svg>
      </SmallKnob>
      <SmallKnob $x={357} $y={375} $r={20} aria-label="Shrink window">
        <svg width="24" height="24" viewBox="0 0 24 24" fill="none" stroke="#050505" strokeWidth="3">
          <path d="M13 21H2.500V2.500h19v11" />
          <path d="M12 12l8 8M21.500 14v7.500H14" />
        </svg>
      </SmallKnob>
      <SmallKnob $x={-5} $y={33} $r={20} aria-label="Full screen">
        <svg width="26" height="26" viewBox="0 0 26 26" fill="none" stroke="#050505" strokeWidth="2">
          <path d="M6 6h13v14H6zM18 2h5v5M23 19v5h-5" />
        </svg>
      </SmallKnob>
      <SmallKnob $x={-5} $y={375} $r={20} aria-label="Settings">
        <svg width="28" height="28" viewBox="0 0 28 28" fill="none" stroke="#050505">
          <circle cx="14" cy="14" r="7" strokeWidth="4" />
          <circle cx="14" cy="14" r="10.500" strokeWidth="3" strokeDasharray="5 4" />
        </svg>
      </SmallKnob>
      <LargeKnob $x={392} $y={136} $r={38} aria-label="Camera off">
        <svg width="44" height="50" viewBox="0 0 44 50">
          <path d="M8 48q14-12 28 0z" fill="#5b5b5b" />
          <circle cx="22" cy="24" r="19" fill="#6b6d70" />
          <path d="M5 18a19 19 0 0 1 34 0q-17-9-34 0z" fill="#a4a6a9" />
          <circle cx="22" cy="26" r="16" fill="#29292b" />
          <circle cx="22" cy="25" r="6" fill="#0c0c0e" stroke="#8a8a8a" strokeWidth="2" />
          <circle cx="22" cy="27" r="12.500" fill="none" stroke="#dd1d21" strokeWidth="6" />
          <path d="M14 20l17 15" stroke="#dd1d21" strokeWidth="5" />
          <path d="M10 21a14 14 0 0 1 24 0" fill="none" stroke="#f4777a" strokeWidth="1.500" />
        </svg>
      </LargeKnob>
      <LargeKnob $x={392} $y={276} $r={38} aria-label="Speaker">
        <svg width="56" height="46" viewBox="0 0 56 46">
          <defs>
            <linearGradient id="horn" x1="0" y1="0" x2="0" y2="1">
              <stop offset="0" stopColor="#8d8d8d" />
              <stop offset=".4" stopColor="#fff" />
              <stop offset="1" stopColor="#777" />
            </linearGradient>
          </defs>
          <rect x="1" y="18" width="12" height="10" fill="url(#horn)" stroke="#888" />
          <path d="M13 18L31 2v42L13 28z" fill="url(#horn)" stroke="#999" />
          <rect x="29" y="3" width="3" height="41" fill="#999" />
          <g fill="none" stroke="#5f6d78" strokeWidth="3.400">
            <path d="M36 16q6 7 0 14M41 10q9 13 0 26M46 4q13 19 0 38" />
          </g>
        </svg>
      </LargeKnob>
      <Elapsed>00:01:03</Elapsed>
    </Recorder>
  );
}

/* ---------- taskbar icons ---------- */

const ExplorerIcon = () => (
  <svg width="38" height="34" viewBox="0 0 38 34">
    <path d="M1 0h32v30l-8 2L1 28z" fill="#9fcbe6" />
    <path d="M25 0h4v32M30 0h4v30" fill="none" stroke="#5b9cc4" />
    <path d="M1 22l24 4v6L1 28z" fill="#d6ecf8" />
    <circle cx="14" cy="14" r="12" fill="#ee7a25" stroke="#fff" strokeWidth="2" />
  </svg>
);

const ChromeIcon = () => (
  <svg width="38" height="38" viewBox="-19 -19 38 38">
    <circle r="19" fill="#e8b93a" />
    <path d="M-16.500 -9.500A19 19 0 0 1 17.200 -8H0L-8 4z" fill="#c9473b" />
    <path d="M-16.500 -9.500A19 19 0 0 0 1 19L8 4.500-1 6z" fill="#2f9e58" />
    <path d="M17.200 -8A19 19 0 0 1 0 19L8 5V-8z" fill="#f6c544" />
    <circle r="8.500" fill="#f2f2f2" />
    <circle r="6.500" fill="#4583e8" />
  </svg>
);

const OperaIcon = () => (
  <svg width="40" height="40" viewBox="0 0 40 40">
    <defs>
      <linearGradient id="opera" x1="0" x2="1" y1=".2" y2="0.600">
        <stop offset="0" stopColor="#ff2030" />
        <stop offset=".6" stopColor="#d81420" />
        <stop offset="1" stopColor="#f04040" />
      </linearGradient>
    </defs>
    <path d="M20 1a19 19 0 1 0 .1 0zM20 6q9 2 9 14t-9 14q-9-2-9-14t9-14z" fill="url(#opera)" fillRule="evenodd" />
  </svg>
);

const ToolsIcon = () => (
  <svg width="40" height="40" viewBox="0 0 40 40">
    <circle cx="20" cy="20" r="19" fill="#2c3544" stroke="#f1f3f5" strokeWidth="2" />
    <path d="M11 10l11 11" stroke="#c9d2da" strokeWidth="1.500" />
    <path d="M22 22l7 7" stroke="#d99334" strokeWidth="5" />
    <path d="M12 28L27 14" stroke="#f6f6f6" strokeWidth="4" />
    <path d="M22 13q1-4 5-3l-2 3 2 3 4-2q1 4-4 5-4-1-5-6zM9 25q4-2 7 1 2 4-2 5l-1-3-4 0z" fill="#f6f6f6" />
  </svg>
);

const RingIcon = () => (
  <svg width="40" height="40" viewBox="0 0 40 40" fill="none">
    <rect width="40" height="40" rx="3" fill="#f8f8f8" />
    <circle cx="20" cy="20" r="14.500" stroke="#27455c" strokeWidth="3.200" />
    <path d="M5.500 20a14.500 14.500 0 0 1 6-12" stroke="#2a8fa5" strokeWidth="3.200" />
    <path d="M6 26l8-1 5-8h5l2-4" stroke="#2a3550" strokeWidth="3" />
    <path d="M18 24h5l10-7M19 23l5-5 9-2" stroke="#2a3550" strokeWidth="2.500" />
  </svg>
);

const GreenIcon = () => (
  <svg width="40" height="40" viewBox="0 0 40 40">
    <defs>
      <linearGradient id="leaf" x1="0" x2="1" y1="0" y2=".3">
        <stop offset="0" stopColor="#159c12" />
        <stop offset=".4" stopColor="#0f820e" />
        <stop offset=".65" stopColor="#10a80e" />
        <stop offset="1" stopColor="#19cc10" />
      </linearGradient>
      <linearGradient id="fold" x1="0" x2="0" y1="0" y2="1">
        <stop offset="0" stopColor="#053505" stopOpacity=".65" />
        <stop offset="1" stopColor="#053505" stopOpacity=".1" />
      </linearGradient>
    </defs>
    <rect width="40" height="40" fill="url(#leaf)" />
    <path d="M16 0h14L17 40H10z" fill="url(#fold)" />
  </svg>
);

function TaskbarPanel() {
  return (
    <Taskbar>
      <Apps>
        <li><AppButton aria-label="Media player"><ExplorerIcon /></AppButton></li>
        <li><AppButton aria-label="Chrome"><ChromeIcon /></AppButton></li>
        <li><AppButton $active={1} aria-label="Opera"><OperaIcon /></AppButton></li>
        <li><AppButton aria-label="Tools"><ToolsIcon /></AppButton></li>
        <li><AppButton aria-label="Sync"><RingIcon /></AppButton></li>
        <li><AppButton $active={2} aria-label="Studio"><GreenIcon /></AppButton></li>
      </Apps>
      <Tray>
        <Language>EN</Language>
        <TrayRow>
          <button aria-label="Show hidden icons">
            <svg width="12" height="10" viewBox="0 0 12 10"><path d="M8 0v10L3 5z" fill="#fff" /></svg>
          </button>
        </TrayRow>
        <TrayRow>
          <button aria-label="Action center">
            <svg width="20" height="20" viewBox="0 0 20 20">
              <path d="M2 1v18" stroke="#fff" strokeWidth="1.500" />
              <path d="M4 3q4-2 7 0v7q-3-2-7 0zM12 5q3 1 6 0l-1 6q-3 1-5 0z" fill="#fff" />
            </svg>
          </button>
          <button aria-label="Network">
            <svg width="20" height="20" viewBox="0 0 20 20" fill="none" stroke="#fff" strokeWidth="1.600">
              <path d="M8 4h10v11H5V8M8 18h8M12 15v3" />
              <path d="M1 1v4q0 2 2.500 2T6 5V1M3.500 7v5" />
            </svg>
          </button>
        </TrayRow>
        <TrayRow>
          <button aria-label="Volume">
            <svg width="20" height="18" viewBox="0 0 20 18">
              <path d="M2 6h2l5-5v16l-5-5H2z" fill="#fff" />
              <path d="M12 6q2 3 0 6M15 4q3 5 0 10" fill="none" stroke="#fff" strokeWidth="1.400" />
            </svg>
          </button>
        </TrayRow>
        <Clock>
          10:42 ص
          <Day lang="ar">الجمعة</Day>
        </Clock>
      </Tray>
    </Taskbar>
  );
}

/* ---------- app ---------- */

export default function App() {
  return (
    <>
      <GlobalStyle />
      <Screen>
        <Desktop>
          <TrackPane>
            <TrackScroll>
              <ScrolledList>
                {tracks.map((t, i) => <TrackLine key={i} track={t} index={i} />)}
              </ScrolledList>
            </TrackScroll>
            <TempoBar>
              <TempoFader type="range" min="0" max="100" defaultValue={30} aria-label="Tempo" />
              <span>110.000</span>
              <Meter>4</Meter>
              <Tuning><ForkIcon /><TuneKey>= A</TuneKey></Tuning>
            </TempoBar>
          </TrackPane>

          <ArrangePane>
            <ArrangeTop>
              <Lanes>
                <ScrolledList>
                  {lanes.map((parts, i) => (
                    <Lane key={i} $h={rowHeight(i)}>
                      <LaneArt>
                        {parts.map((p, n) => <PartArt key={n} part={p} />)}
                      </LaneArt>
                    </Lane>
                  ))}
                </ScrolledList>
                <CursorLine $x={219} />
                <CursorLine $x={264} />
                <PencilCursor width="21" height="22" viewBox="0 0 21 22" aria-hidden="true">
                  <path d="M1 21l2-6L15 3q2-2 4 0t-1 4L7 18z" fill="#fff" stroke="#111" strokeWidth="1.300" />
                  <path d="M1 21l1.500-5 4 3z" fill="#111" />
                  <path d="M5 15L16 5" stroke="#999" strokeDasharray="2 1" />
                </PencilCursor>
              </Lanes>
              <VScroll>
                <ThumbV />
                <TrackV />
                <ScrollButton aria-label="Scroll down"><Arrow d="M1 3h9L5.500 8z" /></ScrollButton>
                <ScrollButton aria-label="Zoom in tracks"><Arrow d="M4 2h3v2h2v3H7v2H4V7H2V4h2z" /></ScrollButton>
                <SplitV />
                <ScrollButton aria-label="Zoom out tracks"><Arrow d="M2 4h7v2H2z" /></ScrollButton>
              </VScroll>
            </ArrangeTop>
            <HScroll>
              <ScrollButton aria-label="Scroll left"><Arrow d="M7 1v9L2 5.500z" /></ScrollButton>
              <GripH $w={4} />
              <ThumbH />
              <GripH $w={5} />
              <TrackH />
              <ScrollButton aria-label="Scroll right"><Arrow d="M3 1v9l5-4.500z" /></ScrollButton>
              <ScrollButton aria-label="Zoom in time"><Arrow d="M4 2h2v2h2v2H6v2H4V6H2V4h2z" /></ScrollButton>
              <GripH $w={7} />
              <ScrollButton aria-label="Zoom out time"><Arrow d="M1 4h8v2H1z" /></ScrollButton>
              <ScrollButton aria-label="Zoom tool"><MagnifyIcon /></ScrollButton>
            </HScroll>
            <Transport>
              <TransportButton $w={20} aria-label="Record">
                <svg width="20" height="16" viewBox="0 0 20 16"><circle cx="10" cy="9.500" r="7" fill="#bbb" stroke="#555" strokeWidth="2" /></svg>
              </TransportButton>
              <TransportButton $w={32} aria-label="Loop">
                <svg width="26" height="16" viewBox="0 0 26 16" fill="none">
                  <path d="M3 14V5q0-3 3-3h12q3 0 3 3v9M9 9h7M13 3v8" stroke="#333" strokeWidth="3" />
                  <path d="M3 14V5q0-3 3-3h12q3 0 3 3v9" stroke="#ccc" />
                </svg>
              </TransportButton>
              <TransportButton $w={20} aria-label="Play from start">
                <svg width="20" height="16" viewBox="0 0 20 16" fill="#ccc" stroke="#333"><path d="M2 1v14M5 1l13 7-13 7z" /></svg>
              </TransportButton>
              <TransportButton $w={16} aria-label="Play">
                <svg width="16" height="16" viewBox="0 0 16 16" fill="#ccc" stroke="#333"><path d="M1 1l13 7-13 7z" /></svg>
              </TransportButton>
              <TransportButton $w={16} aria-label="Pause">
                <svg width="16" height="16" viewBox="0 0 16 16" fill="#aaa" stroke="#555"><path d="M3 1h4v15H3zM11 1h4v15h-4z" /></svg>
              </TransportButton>
              <TransportButton $w={16} aria-label="Stop">
                <svg width="16" height="16" viewBox="0 0 16 16" fill="#b5b5b5" stroke="#555"><path d="M2 1h13v14H2z" /></svg>
              </TransportButton>
              <TransportRule />
              <TransportButton $w={16} aria-label="Go to start">
                <svg width="16" height="16" viewBox="0 0 16 16" fill="#ccc" stroke="#444"><path d="M1 1h2v15H1zM15 1v15L5 8z" /></svg>
              </TransportButton>
              <TransportButton $w={16} aria-label="Go to end">
                <svg width="16" height="16" viewBox="0 0 16 16" fill="#ccc" stroke="#444"><path d="M13 1h2v15h-2zM1 1v15L11 8z" /></svg>
              </TransportButton>
            </Transport>
          </ArrangePane>

          <Edge />
          <TaskbarPanel />
          <RecorderPanel />
        </Desktop>
      </Screen>
    </>
  );
}
